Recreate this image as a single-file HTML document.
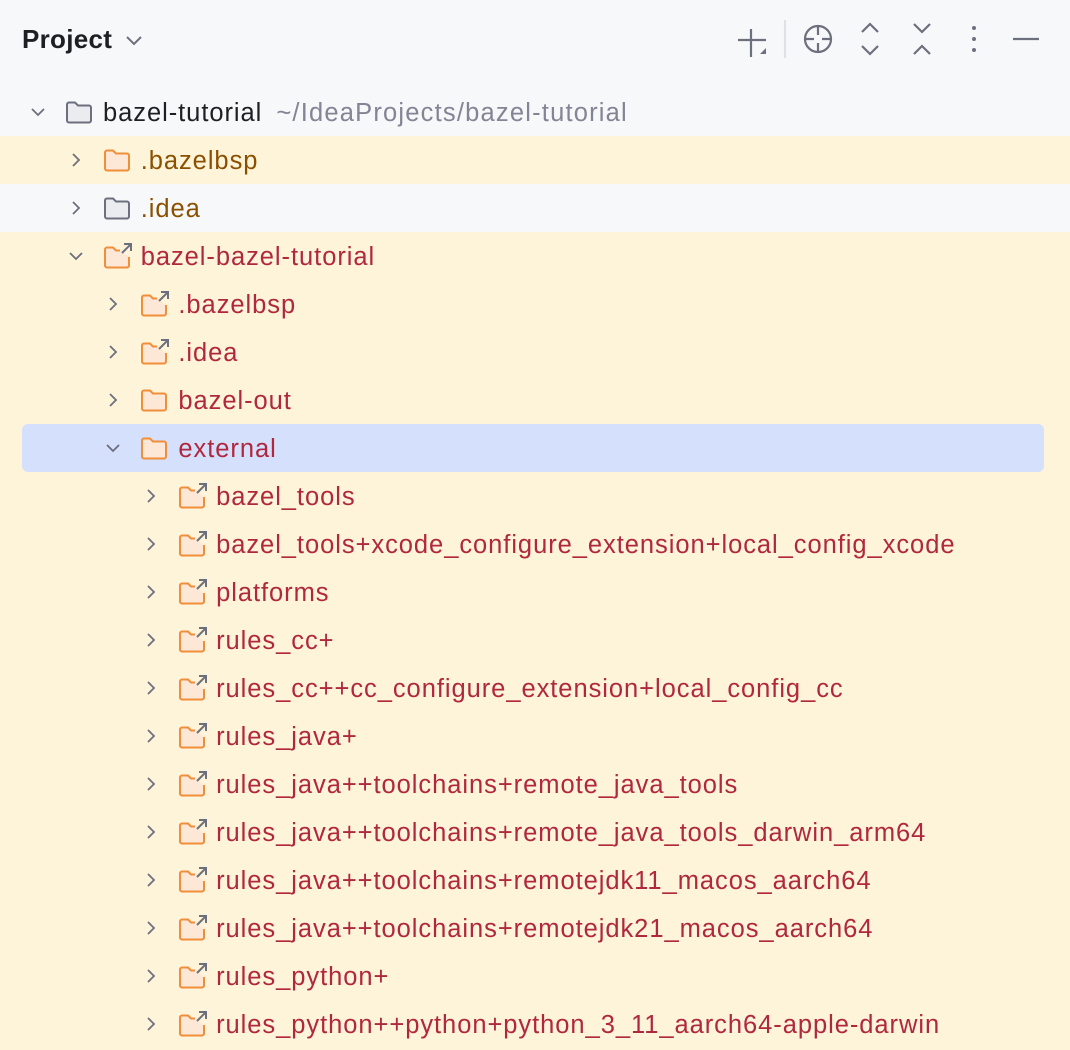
<!DOCTYPE html>
<html><head><meta charset="utf-8"><style>
*{margin:0;padding:0;box-sizing:border-box}
body{width:1070px;height:1050px;background:#f7f8fa;font-family:"Liberation Sans",sans-serif;overflow:hidden;position:relative}
.hdr{position:absolute;left:22px;top:24px;font-size:26px;font-weight:bold;color:#1e1f22;letter-spacing:0.3px}
.row{position:absolute;left:0;width:1070px;height:48px}
.y{background:#fef4d9}
.sel{position:absolute;left:22px;top:424px;width:1022px;height:48px;background:#d4e0fc;border-radius:6px}
.it{position:absolute;height:48px;line-height:50px;font-size:25.5px;letter-spacing:0.95px;white-space:nowrap}
.it svg{position:absolute}
.r{color:#b0283d}.b{color:#8a5000}.k{color:#1e1f22}
</style></head><body>
<div class="hdr">Project</div>
<svg style="position:absolute;left:124px;top:33px" width="20" height="14"><path d="M3 4l7 7 7-7" fill="none" stroke="#6c707e" stroke-width="2"/></svg>
<svg style="position:absolute;left:730px;top:18px" width="320" height="44" fill="none" stroke="#6c707e" stroke-width="2.2">
<path d="M21 11v28M8 22h28"/><path d="M36 36l-6 0 6-6z" fill="#6c707e" stroke="none"/>
<path d="M55 2v38" stroke="#dfe1e5"/>
<circle cx="88" cy="21" r="13"/><path d="M88 8v9M88 25v9M75 21h9M92 21h9"/>
<path d="M132 14l8-8 8 8M132 28l8 8 8-8"/>
<path d="M184 6l8 8 8-8M184 36l8-8 8 8"/>
<circle cx="244" cy="10" r="2" fill="#6c707e" stroke="none"/><circle cx="244" cy="21" r="2" fill="#6c707e" stroke="none"/><circle cx="244" cy="32" r="2" fill="#6c707e" stroke="none"/>
<path d="M283 21h26"/>
</svg>
<div class="row y" style="top:136px"></div>
<div class="row y" style="top:232px;height:818px"></div>
<div class="sel"></div>
<svg width="0" height="0" style="position:absolute"><defs>
<symbol id="fg" viewBox="0 0 28 26"><path d="M2 5.5a2 2 0 0 1 2-2h6l3 3h11a2 2 0 0 1 2 2v13a2 2 0 0 1-2 2H4a2 2 0 0 1-2-2z" fill="#ebecf0" stroke="#6c707e" stroke-width="2"/></symbol>
<symbol id="fo" viewBox="0 0 28 26"><path d="M2 5.5a2 2 0 0 1 2-2h6l3 3h11a2 2 0 0 1 2 2v13a2 2 0 0 1-2 2H4a2 2 0 0 1-2-2z" fill="#fde8d8" stroke="#f08e3a" stroke-width="2"/></symbol>
<symbol id="fl" viewBox="0 0 30 30"><path d="M17 10.5h-4l-3-3H4a2 2 0 0 0-2 2v16a2 2 0 0 0 2 2h20a2 2 0 0 0 2-2V17" fill="#fde8d8" stroke="#f08e3a" stroke-width="2"/><path d="M19 13l8-8M21 4h7v7" fill="none" stroke="#6c707e" stroke-width="2"/></symbol>
<symbol id="cr" viewBox="0 0 16 16"><path d="M5 2l6 6-6 6" fill="none" stroke="#6c707e" stroke-width="1.8"/></symbol>
<symbol id="cd" viewBox="0 0 16 16"><path d="M2 5l6 6 6-6" fill="none" stroke="#6c707e" stroke-width="1.8"/></symbol>
</defs></svg>
<div id="t"></div>
<script>
var rows=[
[0,'d','g','bazel-tutorial','k',' <span style="color:#818594;padding-left:6px;letter-spacing:1.2px">~/IdeaProjects/bazel-tutorial</span>'],
[1,'r','o','.bazelbsp','b'],
[1,'r','g','.idea','b'],
[1,'d','l','bazel-bazel-tutorial','r'],
[2,'r','l','.bazelbsp','r'],
[2,'r','l','.idea','r'],
[2,'r','o','bazel-out','r'],
[2,'d','o','external','r'],
[3,'r','l','bazel_tools','r'],
[3,'r','l','bazel_tools+xcode_configure_extension+local_config_xcode','r'],
[3,'r','l','platforms','r'],
[3,'r','l','rules_cc+','r'],
[3,'r','l','rules_cc++cc_configure_extension+local_config_cc','r'],
[3,'r','l','rules_java+','r'],
[3,'r','l','rules_java++toolchains+remote_java_tools','r'],
[3,'r','l','rules_java++toolchains+remote_java_tools_darwin_arm64','r'],
[3,'r','l','rules_java++toolchains+remotejdk11_macos_aarch64','r'],
[3,'r','l','rules_java++toolchains+remotejdk21_macos_aarch64','r'],
[3,'r','l','rules_python+','r'],
[3,'r','l','rules_python++python+python_3_11_aarch64-apple-darwin','r']];
var h='';
rows.forEach(function(r,i){
 var top=88+i*48, x=30+r[0]*37.7;
 var ic=r[2]=='l'?'<svg style="left:'+(x+35)+'px;top:8px" width="30" height="30"><use href="#fl"/></svg>':'<svg style="left:'+(x+35)+'px;top:11px" width="28" height="26"><use href="#f'+r[2]+'"/></svg>';
 h+='<div class="it" style="left:0;top:'+top+'px;width:1070px"><svg style="left:'+x+'px;top:16px" width="16" height="16"><use href="#c'+r[1]+'"/></svg>'+ic+'<span class="'+r[4]+'" style="position:absolute;left:'+(x+73)+'px">'+r[3]+(r[5]||'')+'</span></div>';
});
document.getElementById('t').innerHTML=h;
</script>
</body></html>
